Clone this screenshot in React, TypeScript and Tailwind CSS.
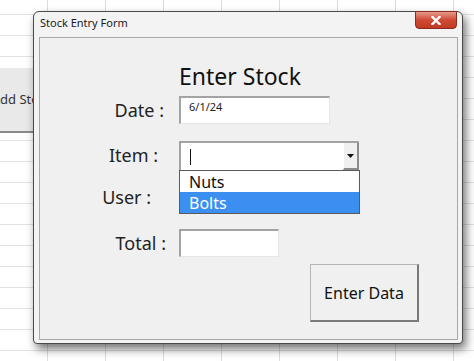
import React from "react";

const font = { fontFamily: '"Noto Sans", "Open Sans", sans-serif' };

export default function App() {
  return (
    <div
      className="relative w-[474px] h-[361px] overflow-hidden bg-white bg-[linear-gradient(to_right,#dcdcdc_1px,transparent_1px),linear-gradient(to_bottom,#e2e2e2_1px,transparent_1px)] bg-[size:58px_21px] bg-[position:47px_14px]"
      style={font}
    >
      {/* spreadsheet shape button partly hidden */}
      <div className="absolute left-[-40px] top-[68px] w-[120px] h-[65px] bg-[#e9e9e9] border-b-2 border-[#8a8a8a] flex items-center justify-center text-[13px] text-[#333]">
        <span className="ml-[4px]">Add Stock</span>
      </div>

      {/* dialog window */}
      <div className="absolute left-[33px] top-[11px] w-[430px] h-[333px] rounded-t-[6px] rounded-b-[4px] border border-[#4a4a4a] bg-[#f3f3f3] shadow-[3px_5px_10px_rgba(0,0,0,0.55)] flex flex-col">
        {/* title bar */}
        <div className="h-[25px] flex items-start justify-between pl-[6px] pr-[5px]">
          <span className="text-[11px] text-[#1a1a1a] mt-[5px] leading-none">Stock Entry Form</span>
          <div className="w-[42px] h-[18px] mt-[-1px] rounded-b-[4px] border border-[#8b2a1e] bg-[linear-gradient(to_bottom,#e69a8a,#cf4a34_50%,#c03a24)] flex items-center justify-center">
            <svg width="10" height="9" viewBox="0 0 10 9">
              <path d="M1.5 1 L8.5 8 M8.5 1 L1.5 8" stroke="#ffffff" strokeWidth="2.4" strokeLinecap="square" />
            </svg>
          </div>
        </div>

        {/* client area */}
        <div className="flex-1 ml-[5px] mr-[4px] mb-[3px] border border-[#a8a8a8] bg-[#f0f0f0] flex flex-col relative">
          <div className="text-[23px] leading-none text-[#111] mt-[27px] ml-[139px]">Enter Stock</div>

          {/* Date row */}
          <div className="flex items-center mt-[8px] h-[28px]">
            <div className="w-[139px] text-right pr-[15px] text-[18px] text-[#222]">Date :</div>
            <div className="w-[151px] h-[28px] bg-white border-t-2 border-l-2 border-[#a3a3a3] border-r border-b border-r-[#e6e6e6] border-b-[#e6e6e6] text-[11px] text-[#222] pl-[8px] pt-[3px] leading-none">
              6/1/24
            </div>
          </div>

          {/* Item row */}
          <div className="flex items-center mt-[17px] h-[29px]">
            <div className="w-[139px] text-right pr-[21px] text-[18px] text-[#222]">Item :</div>
            <div className="w-[180px] h-[29px] bg-white border-t-2 border-l-2 border-[#a3a3a3] flex">
              <div className="flex-1 flex items-center pl-[9px]">
                <div className="w-[1px] h-[16px] bg-[#111]" />
              </div>
              <div className="w-[16px] h-full bg-[#f0f0f0] border-r-2 border-b-2 border-[#8c8c8c] border-l border-l-white flex items-center justify-center">
                <svg width="7" height="4" viewBox="0 0 7 4">
                  <path d="M0 0 H7 L3.5 4 Z" fill="#111" />
                </svg>
              </div>
            </div>
          </div>

          {/* User row */}
          <div className="flex items-center mt-[13px] h-[28px]">
            <div className="w-[139px] text-right pr-[28px] text-[18px] text-[#222]">User :</div>
          </div>

          {/* Total row */}
          <div className="flex items-center mt-[18px] h-[28px]">
            <div className="w-[139px] text-right pr-[13px] text-[18px] text-[#222]">Total :</div>
            <div className="w-[100px] h-[28px] bg-white border-t-2 border-l-2 border-[#a3a3a3] border-r border-b border-r-[#e6e6e6] border-b-[#e6e6e6]" />
          </div>

          {/* button */}
          <div className="flex justify-end mt-[7px] mr-[38px]">
            <button className="w-[109px] h-[58px] bg-[#f0f0f0] border border-[#b5b5b5] border-r-2 border-b-2 border-r-[#7a7a7a] border-b-[#7a7a7a] text-[16px] text-[#111]">
              Enter Data
            </button>
          </div>

          {/* dropdown list */}
          <div className="absolute left-[139px] top-[132px] w-[181px] h-[44px] border border-[#5a5a5a] bg-white flex flex-col text-[16px] leading-none">
            <div className="h-[21px] flex items-center pl-[9px] text-[#111]">Nuts</div>
            <div className="h-[21px] flex items-center pl-[9px] bg-[#3a8ff0] text-white">Bolts</div>
          </div>
        </div>
      </div>
    </div>
  );
}
